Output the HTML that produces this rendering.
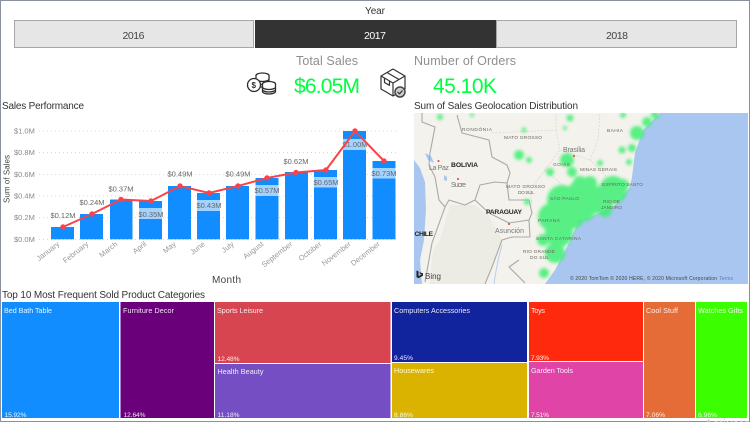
<!DOCTYPE html>
<html><head><meta charset="utf-8"><style>
html,body{margin:0;padding:0;background:#fff;width:750px;height:422px;overflow:hidden}
svg{display:block;filter:blur(.35px)}
text{font-family:"Liberation Sans",sans-serif}
.t{font-size:10px;fill:#333}
.ax{font-size:7.5px;fill:#888}
.mo{font-size:7.5px;fill:#999;text-anchor:end}
.v{font-size:7.5px;fill:#666;text-anchor:middle}
.b{fill:#118DFF}
.w{fill:#fff;opacity:.62}
.m{font-size:4.800px;fill:#6b6560}
.c{font-size:7px;fill:#777}
.k{font-size:6.800px;font-weight:bold;fill:#222}
.l{font-size:7.200px;fill:#fff;fill-opacity:.9}
.p{font-size:6.600px;fill:#fff;fill-opacity:.9}
.g{fill:#3df072}
</style></head><body>
<svg width="750" height="422" viewBox="0 0 750 422" xmlns="http://www.w3.org/2000/svg">
<defs>
<filter id="bl" x="-20%" y="-20%" width="140%" height="140%"><feGaussianBlur stdDeviation="1.600"/></filter>
<clipPath id="mc"><rect x="414" y="113" width="334" height="171"/></clipPath>
</defs>
<rect width="750" height="422" fill="#fff"/>
<rect x="0" y="0" width="750" height="1" fill="#8a8fa0"/>
<rect x="0" y="0" width="1" height="422" fill="#8a8fa0"/>
<rect x="749" y="0" width="1" height="422" fill="#8a8fa0"/>
<rect x="0" y="421" width="750" height="1" fill="#8a8fa0"/>

<text x="365" y="14" class="t" textLength="20" lengthAdjust="spacing">Year</text>
<rect x="14.500" y="20.500" width="239" height="27" fill="#e6e6e6" stroke="#a6a6a6"/>
<rect x="255" y="20" width="241" height="28" fill="#333"/>
<rect x="496.500" y="20.500" width="240" height="27" fill="#e6e6e6" stroke="#a6a6a6"/>
<text x="122.500" y="39" font-size="10.500" fill="#444" textLength="22">2016</text>
<text x="364" y="39" font-size="10.500" fill="#fff" textLength="22">2017</text>
<text x="606" y="39" font-size="10.500" fill="#444" textLength="22">2018</text>

<text x="296" y="65" font-size="12.500" fill="#8f8f8f" textLength="62">Total Sales</text>
<text x="294" y="93" font-size="21" fill="#00ff40" textLength="66">$6.05M</text>
<text x="414" y="65" font-size="12.500" fill="#8f8f8f" textLength="102">Number of Orders</text>
<text x="433" y="93" font-size="21" fill="#00ff40" textLength="64">45.10K</text>

<g fill="#fff" stroke="#2d2d2d" stroke-width="1.300">
<ellipse cx="262.500" cy="75.500" rx="6.500" ry="2.500"/>
<path d="M256 75.500v9c0 1.400 3 2.500 6.500 2.500s6.500-1.100 6.500-2.500v-9M256 79c0 1.400 3 2.500 6.500 2.500s6.500-1.100 6.500-2.500M256 82c0 1.400 3 2.500 6.500 2.500s6.500-1.100 6.500-2.500"/>
<ellipse cx="269" cy="84" rx="6.500" ry="2.500"/>
<path d="M262.500 84v7.500c0 1.400 3 2.500 6.500 2.500s6.500-1.100 6.500-2.500v-7.500M262.500 87c0 1.400 3 2.500 6.500 2.500s6.500-1.100 6.500-2.500M262.500 89.500c0 1.400 3 2.500 6.500 2.500s6.500-1.100 6.500-2.500"/>
<circle cx="254" cy="85" r="6.500"/>
</g>
<text x="251.500" y="88" font-size="8" font-weight="bold" fill="#2d2d2d">$</text>

<g fill="none" stroke="#333" stroke-width="1.200" stroke-linejoin="round">
<path d="M381 76l12-7 12 7v13l-12 7-12-7z"/>
<path d="M381 76l12 7 12-7M393 83v13M387 72.500l12 7M384.500 78v4.500l5 2.800v-4.500"/>
<circle cx="400" cy="92" r="5" fill="#ccc" stroke="#444" stroke-width="1.500"/>
<path d="M397.500 92l2 1.800 3-3.300"/>
</g>

<text x="2" y="109" class="t" textLength="82">Sales Performance</text>
<text x="414" y="109" class="t" textLength="164">Sum of Sales Geolocation Distribution</text>

<g stroke="#ccc" stroke-width=".8" stroke-dasharray="1 3">
<path d="M39 131H398M39 152.700H398M39 174.400H398M39 196H398M39 217.700H398M39 239.300H398"/>
</g>
<g class="ax">
<text x="14" y="133.500">$1.0M</text><text x="14" y="155">$0.8M</text><text x="14" y="177">$0.6M</text><text x="14" y="198.500">$0.4M</text><text x="14" y="220">$0.2M</text><text x="14" y="242">$0.0M</text>
</g>
<text transform="translate(9.500 179) rotate(-90)" font-size="8" fill="#444" text-anchor="middle" textLength="48">Sum of Sales</text>

<rect class="b" x="51" y="227" width="23" height="12.300"/>
<rect class="b" x="80" y="214" width="23" height="25.300"/>
<rect class="b" x="110" y="199.500" width="22.500" height="39.800"/>
<rect class="b" x="139" y="201" width="23" height="38.300"/>
<rect class="b" x="168" y="186" width="23" height="53.300"/>
<rect class="b" x="197" y="193" width="23" height="46.300"/>
<rect class="b" x="226" y="186" width="23" height="53.300"/>
<rect class="b" x="255.500" y="178" width="23" height="61.300"/>
<rect class="b" x="285" y="172" width="23" height="67.300"/>
<rect class="b" x="314" y="170" width="23" height="69.300"/>
<rect class="b" x="343" y="131" width="23" height="108.300"/>
<rect class="b" x="372.500" y="161" width="23" height="78.300"/>

<rect class="w" x="139" y="208" width="23" height="11"/>
<rect class="w" x="197" y="200" width="23" height="11"/>
<rect class="w" x="255.500" y="185" width="23" height="11"/>
<rect class="w" x="314" y="177" width="23" height="10.500"/>
<rect class="w" x="343" y="139" width="23" height="11"/>
<rect class="w" x="372.500" y="168" width="23" height="10.500"/>

<g class="v">
<text x="63" y="218">$0.12M</text><text x="92" y="205">$0.24M</text><text x="121" y="191.500">$0.37M</text>
<text x="151" y="217">$0.35M</text><text x="180" y="176.500">$0.49M</text><text x="209" y="208">$0.43M</text>
<text x="238" y="176.500">$0.49M</text><text x="267" y="193">$0.57M</text><text x="296" y="164">$0.62M</text>
<text x="326" y="185">$0.65M</text><text x="355" y="147">$1.00M</text><text x="384" y="176">$0.73M</text>
</g>

<polyline points="63,227 92,214 121,199.500 151,201 180,186 209,193 238,186 267,178 296,172.500 326,170 355,131 384,161" fill="none" stroke="#f8434a" stroke-width="2"/>
<g fill="#f8434a">
<circle cx="63" cy="227" r="2.700"/><circle cx="92" cy="214" r="2.700"/><circle cx="121" cy="199.500" r="2.700"/><circle cx="151" cy="201" r="2.700"/><circle cx="180" cy="186" r="2.700"/><circle cx="209" cy="193" r="2.700"/><circle cx="238" cy="186" r="2.700"/><circle cx="267" cy="178" r="2.700"/><circle cx="296" cy="172.500" r="2.700"/><circle cx="326" cy="170" r="2.700"/><circle cx="355" cy="131" r="2.700"/><circle cx="384" cy="161" r="2.700"/>
</g>
<g class="mo">
<text transform="translate(60 245) rotate(-38)">January</text>
<text transform="translate(89 245) rotate(-38)">February</text>
<text transform="translate(118 245) rotate(-38)">March</text>
<text transform="translate(147 245) rotate(-38)">April</text>
<text transform="translate(176.500 245) rotate(-38)">May</text>
<text transform="translate(205.500 245) rotate(-38)">June</text>
<text transform="translate(234.500 245) rotate(-38)">July</text>
<text transform="translate(264 245) rotate(-38)">August</text>
<text transform="translate(293 245) rotate(-38)">September</text>
<text transform="translate(322 245) rotate(-38)">October</text>
<text transform="translate(351.500 245) rotate(-38)">November</text>
<text transform="translate(380.500 245) rotate(-38)">December</text>
</g>
<text x="212" y="283" font-size="10" fill="#444" textLength="29">Month</text>

<!-- map -->
<g clip-path="url(#mc)">
<rect x="414" y="113" width="334" height="171" fill="#f4f2ec"/>
<path d="M414 160L420 168 425 182 426 210 424 240 420 260 422 284H414Z" fill="#a9c6f0"/>
<path d="M660 113L643 130 635 153 632 177 630 187 613 207 590 217 579 220 569 243 555 270 545 284H748V113Z" fill="#a9c6f0"/>
<path d="M425 153l6 3 3 7-6-3zM444 175l3 2 0 4-3-1zM471 262l6-1 1 5-5 1z" fill="#a9c6f0"/>
<path d="M440 240L433 250 430 284H485L492 267 502 240 488 215 475 205 450 205Z" fill="#ecebe4"/>
<path d="M502 245Q497 262 494 284" fill="none" stroke="#b9cfee" stroke-width="1"/>
<g fill="none" stroke="#a9a9a9" stroke-width="1.100" stroke-linejoin="round">
<polyline points="422,113 422,122 435,127 430,153 429,165 435,177 439,200 445,207"/>
<polyline points="445,207 449,200 465,205 475,200 480,185 495,182 507,183 510,173 507,165 492,157 489,140 462,133 457,115"/>
<polyline points="475,200 489,213 509,223 529,220 532,213 529,200 509,200 507,183"/>
<polyline points="529,220 530,237 512,237 502,240 492,267 485,284"/>
<polyline points="445,207 432,243 425,282"/>
<polyline points="519,260 509,267 525,283"/>
</g>
<g fill="none" stroke="#d2cec6" stroke-width=".6" stroke-dasharray="2 1.500">
<path d="M492 133L556 130 556 113M556 130L560 150 545 170 530 190 532 205M560 150L590 160 598 140 600 113M590 160L605 175 612 192M545 170L575 195"/>
</g>
<g class="g" filter="url(#bl)" opacity=".85">
<circle cx="562" cy="200" r="15"/><circle cx="579" cy="193" r="12"/><circle cx="552" cy="217" r="14"/><circle cx="572" cy="217" r="12"/><circle cx="559" cy="233" r="14"/><circle cx="555" cy="253" r="10"/><circle cx="543" cy="240" r="6"/><circle cx="544" cy="273" r="5"/><circle cx="567" cy="160" r="7"/><circle cx="519" cy="155" r="5"/><circle cx="529" cy="160" r="3"/><circle cx="440" cy="117" r="3"/><circle cx="570" cy="118" r="3.500"/><circle cx="550" cy="172" r="4"/><circle cx="527" cy="202" r="3"/><circle cx="524" cy="130" r="2.500"/><circle cx="565" cy="128" r="2"/><circle cx="472" cy="115" r="2"/>
<circle cx="637" cy="133" r="7"/><circle cx="647" cy="122" r="5"/><circle cx="655" cy="115" r="4"/><circle cx="623" cy="115" r="3"/><circle cx="632" cy="148" r="4"/><circle cx="622" cy="150" r="3.500"/><circle cx="629" cy="162" r="3"/><circle cx="600" cy="163" r="3"/><circle cx="613" cy="190" r="14"/><circle cx="600" cy="200" r="14"/><circle cx="583" cy="207" r="14"/><circle cx="623" cy="185" r="6"/><circle cx="605" cy="210" r="7"/><circle cx="585" cy="213" r="8"/><circle cx="590" cy="183" r="7"/><circle cx="580" cy="183" r="7"/><circle cx="572" cy="172" r="5"/>
</g>
<g fill="#e33"><circle cx="438.500" cy="161" r="1"/><circle cx="458" cy="179" r="1"/><circle cx="509" cy="224" r="1"/><circle cx="574" cy="156" r="1"/></g>
<text x="451" y="167" class="k" textLength="27">BOLIVIA</text>
<text x="486" y="214" class="k" textLength="36">PARAGUAY</text>
<text x="414.500" y="236" class="k" textLength="18.500">CHILE</text>
<text x="429" y="170" class="c" textLength="20">La Paz</text>
<text x="451" y="187" class="c" textLength="15">Sucre</text>
<text x="495" y="233" class="c" textLength="29">Asunción</text>
<text x="563" y="152" class="c" textLength="22">Brasília</text>
<text x="462" y="131" class="m" textLength="30">RONDÔNIA</text>
<text x="504" y="139" class="m" textLength="38">MATO GROSSO</text>
<text x="553" y="166" class="m" textLength="17">GOIÁS</text>
<text x="506" y="188" class="m" textLength="39">MATO GROSSO</text>
<text x="518" y="194" class="m" textLength="16">DO SUL</text>
<text x="550" y="200" class="m" textLength="29">SÃO PAULO</text>
<text x="538" y="222" class="m" textLength="22">PARANÁ</text>
<text x="536" y="240" class="m" textLength="45">SANTA CATARINA</text>
<text x="523" y="253" class="m" textLength="32">RIO GRANDE</text>
<text x="530" y="259" class="m" textLength="19">DO SUL</text>
<text x="607" y="132" class="m" textLength="16">BAHIA</text>
<text x="580" y="171" class="m" textLength="37">MINAS GERAIS</text>
<text x="602" y="186" class="m" textLength="41">ESPÍRITO SANTO</text>
<text x="603" y="203" class="m" textLength="17">RIO DE</text>
<text x="601" y="209" class="m" textLength="21">JANEIRO</text>
<text x="570" y="280" font-size="5" fill="#444" textLength="147">© 2020 TomTom © 2020 HERE, © 2020 Microsoft Corporation</text>
<text x="719" y="280" font-size="5" fill="#5a7fc0" textLength="14">Terms</text>
<path d="M416.500 270.500l2 .7v5l3-1.700-1.500-.8-.6-1.600 3.600 1.300v2.200l-4.500 2.600-2-1.200z" fill="#222"/>
<text x="425" y="279" font-size="8" fill="#444" textLength="16">Bing</text>
</g>

<text x="2" y="298" class="t" textLength="203">Top 10 Most Frequent Sold Product Categories</text>

<!-- treemap -->
<rect x="2" y="302" width="117" height="116" fill="#118DFF"/>
<rect x="120.500" y="302" width="93.500" height="116" fill="#6B007B"/>
<rect x="215" y="302" width="175.500" height="61" fill="#D64550"/>
<rect x="215" y="364" width="175.500" height="54" fill="#744EC2"/>
<rect x="392" y="302" width="135" height="60" fill="#12239E"/>
<rect x="392" y="363" width="135" height="55" fill="#D9B300"/>
<rect x="529" y="302" width="114" height="59" fill="#FF2A0E"/>
<rect x="529" y="362" width="114" height="56" fill="#E044A7"/>
<rect x="644" y="302" width="51" height="116" fill="#E66C37"/>
<rect x="696" y="302" width="51" height="116" fill="#3BFF00"/>
<g class="l">
<text x="4" y="313" textLength="48">Bed Bath Table</text>
<text x="123" y="313" textLength="51">Furniture Decor</text>
<text x="217" y="313" textLength="46">Sports Leisure</text>
<text x="217.500" y="374" textLength="46">Health Beauty</text>
<text x="394" y="313" textLength="76">Computers Accessories</text>
<text x="394" y="373" textLength="40">Housewares</text>
<text x="531" y="313" textLength="14">Toys</text>
<text x="531" y="373" textLength="42">Garden Tools</text>
<text x="646" y="313" textLength="32">Cool Stuff</text>
<text x="698" y="313" textLength="45">Watches Gifts</text>
</g>
<g class="p">
<text x="4.500" y="417" textLength="22">15.92%</text>
<text x="123.500" y="417" textLength="22">12.64%</text>
<text x="217.500" y="361" textLength="22">12.48%</text>
<text x="217.500" y="417" textLength="22">11.18%</text>
<text x="394" y="360" textLength="19">9.45%</text>
<text x="394" y="417" textLength="19">8.86%</text>
<text x="531" y="360" textLength="18">7.93%</text>
<text x="531" y="417" textLength="18">7.51%</text>
<text x="646" y="417" textLength="19">7.06%</text>
<text x="698" y="417" textLength="19">6.96%</text>
</g>
<text x="705" y="427" font-size="11" fill="#ccc" textLength="45">Activate</text>
</svg>
</body></html>
